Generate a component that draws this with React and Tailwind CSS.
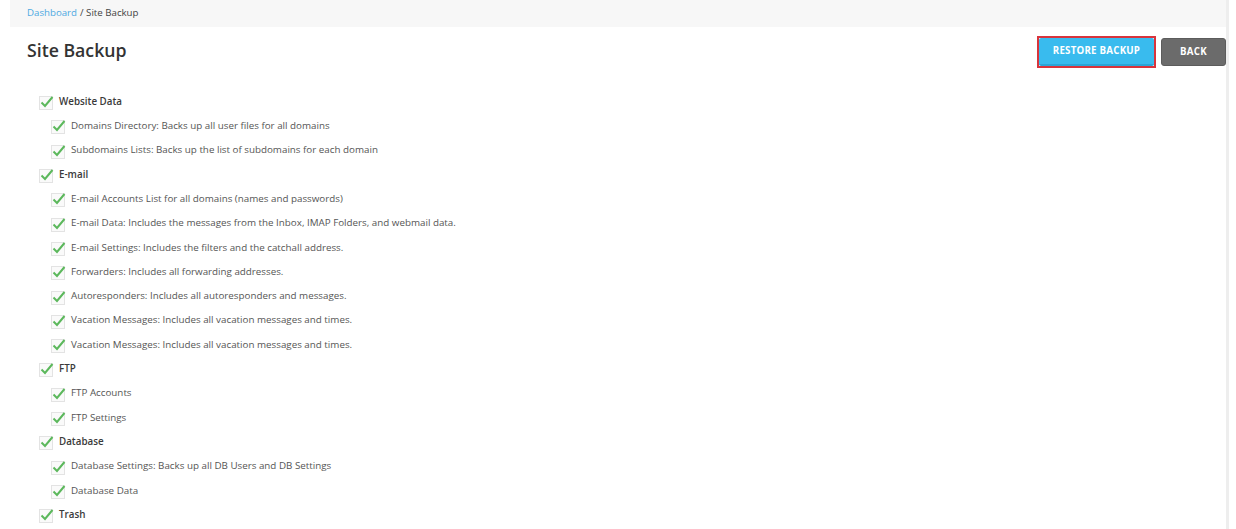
import React from "react";

const sections = [
  {
    title: "Website Data",
    items: [
      "Domains Directory: Backs up all user files for all domains",
      "Subdomains Lists: Backs up the list of subdomains for each domain",
    ],
  },
  {
    title: "E-mail",
    items: [
      "E-mail Accounts List for all domains (names and passwords)",
      "E-mail Data: Includes the messages from the Inbox, IMAP Folders, and webmail data.",
      "E-mail Settings: Includes the filters and the catchall address.",
      "Forwarders: Includes all forwarding addresses.",
      "Autoresponders: Includes all autoresponders and messages.",
      "Vacation Messages: Includes all vacation messages and times.",
      "Vacation Messages: Includes all vacation messages and times.",
    ],
  },
  {
    title: "FTP",
    items: ["FTP Accounts", "FTP Settings"],
  },
  {
    title: "Database",
    items: ["Database Settings: Backs up all DB Users and DB Settings", "Database Data"],
  },
  {
    title: "Trash",
    items: [],
  },
];

// checkbox ya marcado: caja gris clara con el check verde sobresaliendo
const CheckBox = () => (
  <svg width="16" height="16" viewBox="0 0 16 16" className="shrink-0">
    <rect x="0.5" y="2.5" width="13" height="13" fill="#fafafa" stroke="#e3e3e3" />
    <path d="M2.5 8.5 L6 12 L13.5 3" fill="none" stroke="#5cb85c" strokeWidth="2" />
  </svg>
);

const Row = ({ label, strong, nested }) => (
  <li className={`flex h-[24.3px] items-center gap-[4px] ${nested ? "pl-[12px]" : ""}`}>
    <CheckBox />
    <span
      className={
        strong
          ? "text-[9.8px] font-semibold text-[#3a3a3a]"
          : "text-[9.8px] text-[#555]"
      }
    >
      {label}
    </span>
  </li>
);

export default function App() {
  return (
    <div
      className="min-h-[529px] bg-white"
      style={{ fontFamily: '"Open Sans", "Noto Sans", sans-serif' }}
    >
      <div className="ml-[10px] w-[1219px] min-h-[529px] border-r-[3px] border-[#eeeeee]">
        <div className="flex h-[27px] items-center bg-[#f7f7f7] pl-[17px] text-[9.7px] text-[#444]">
          <a href="#" className="text-[#4ea9e2]">
            Dashboard
          </a>
          <span className="ml-[3px]">/ Site Backup</span>
        </div>

        <div className="flex items-start justify-between pl-[17px] pt-[7px]">
          <h1 className="mt-[3px] text-[17.7px] font-semibold text-[#333]">Site Backup</h1>
          <div className="mt-[2px] flex items-center gap-[5px]">
            <div className="border-2 border-[#d8343c] bg-white">
              <button className="flex h-[28px] w-[115px] items-center justify-center rounded-[2px] border-b-2 border-[#2aa6d8] bg-[#39bbee] text-[9.7px] font-bold tracking-wide text-white">
                RESTORE BACKUP
              </button>
            </div>
            <button className="flex h-[28px] w-[65px] items-center justify-center rounded-[3px] border border-[#5c5c5c] bg-[#6b6b6b] text-[9.7px] font-bold tracking-wide text-white">
              BACK
            </button>
          </div>
        </div>

        <ul className="mt-[22px] pl-[29px]">
          {sections.map((s, i) => (
            <React.Fragment key={i}>
              <Row label={s.title} strong />
              {s.items.map((it, j) => (
                <Row key={j} label={it} nested />
              ))}
            </React.Fragment>
          ))}
        </ul>
      </div>
    </div>
  );
}
